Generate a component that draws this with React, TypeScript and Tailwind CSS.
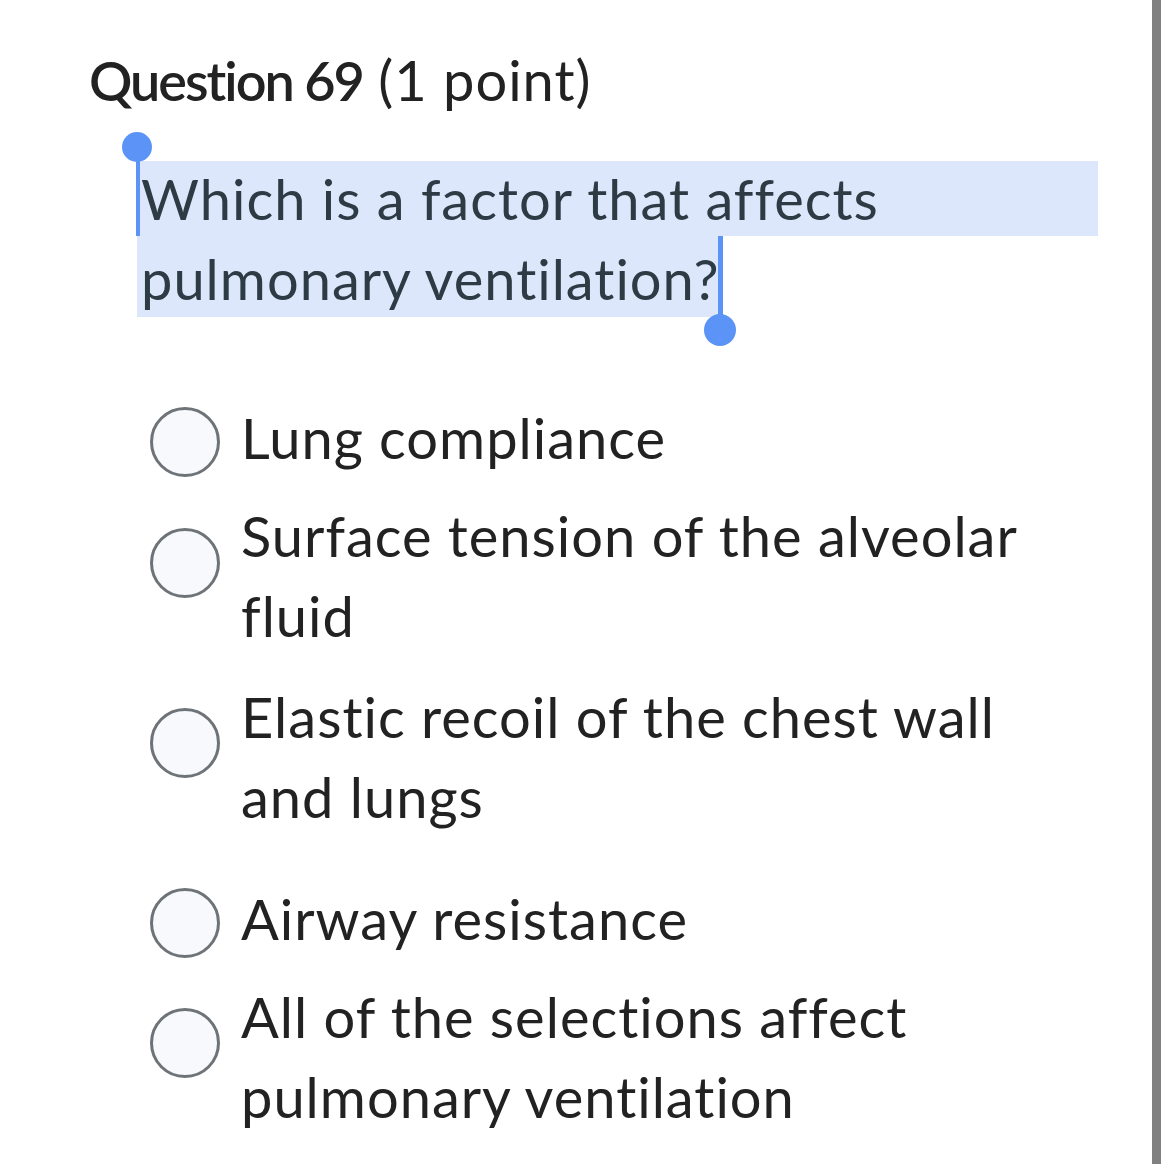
const options = [
  { label: 'Lung compliance', rowGap: 'mt-0', dot: 'mt-[9px]' },
  { label: 'Surface tension of the alveolar fluid', rowGap: 'mt-[18px]', dot: 'mt-[32px]' },
  { label: 'Elastic recoil of the chest wall and lungs', rowGap: 'mt-[21px]', dot: 'mt-[31px]' },
  { label: 'Airway resistance', rowGap: 'mt-[42px]', dot: 'mt-[9px]' },
  { label: 'All of the selections affect pulmonary ventilation', rowGap: 'mt-[18px]', dot: 'mt-[31px]' },
];

const App = () => {
  return (
    <div className="w-[1170px] h-[1164px] bg-white flex overflow-hidden font-['Lato','Noto_Sans',sans-serif] [font-variant-ligatures:none]">
      <main className="flex-1 pl-[89px]">
        {/* Header */}
        <h2 className="pt-[47px] h-[112px] leading-[65px] text-[#222] whitespace-nowrap">
          <span className="text-[54px] font-semibold tracking-[-2px]">Question 69</span>
          <span className="text-[56px] font-normal tracking-[1px]"> (1 point)</span>
        </h2>

        {/* Question text with selection */}
        <div className="relative ml-[48px] mt-[49px] text-[56px] tracking-[1px] text-[#2d3b45]">
          <div className="w-[961px] h-[75px] leading-[75px] pl-[4px] bg-[#dce7fb] whitespace-nowrap">
            Which is a factor that affects
          </div>
          <div className="w-[583px] h-[81px] leading-[77px] pt-[4px] pl-[4px] bg-[#dce7fb] whitespace-nowrap">
            pulmonary ventilation?
          </div>

          {/* selection handles */}
          <div className="absolute left-[-15px] top-[-29px] w-[30px] h-[30px] rounded-full bg-[#5b93f6]" />
          <div className="absolute left-[-1px] top-[-2px] w-[4px] h-[77px] bg-[#5b93f6]" />
          <div className="absolute left-[581px] top-[75px] w-[5px] h-[84px] bg-[#5b93f6]" />
          <div className="absolute left-[567px] top-[153px] w-[32px] h-[32px] rounded-full bg-[#5b93f6]" />
        </div>

        {/* Answers */}
        <div className="ml-[61px] mt-[81px]">
          {options.map((o) => (
            <label key={o.label} className={`flex items-start gap-[21px] ${o.rowGap}`}>
              <span
                className={`shrink-0 w-[70px] h-[70px] rounded-full border-[3px] border-[#6d7377] bg-[#f7f9fd] ${o.dot}`}
              />
              <span className="max-w-[830px] text-[56px] leading-[80px] tracking-[1px] text-[#222]">{o.label}</span>
            </label>
          ))}
        </div>
      </main>

      {/* scrollbar */}
      <div className="w-[9px] h-full bg-[#808080] mr-[9px]" />
    </div>
  );
};

export default App;
